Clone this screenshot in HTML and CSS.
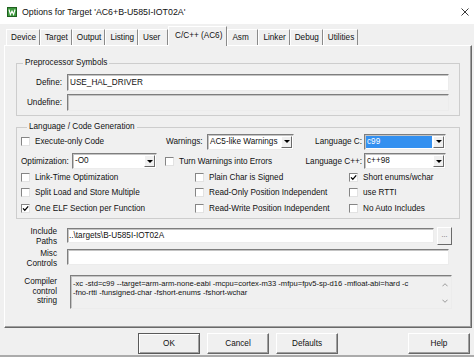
FILE: index.html
```html
<!DOCTYPE html>
<html>
<head>
  <meta charset="utf-8">
  <title>Options for Target 'AC6+B-U585I-IOT02A'</title>
  <link rel="stylesheet" href="styles.css">
</head>
<body>
  <div class="window">
    <!-- Barra de título -->
    <div class="titlebar">
      <svg class="app-icon" viewBox="0 0 10 10">
        <rect x="0.5" y="0.5" width="9" height="9" fill="#3f9a3f" stroke="#1f5f1f"/>
        <path d="M2 2.5 L3.4 7.5 L5 4 L6.6 7.5 L8 2.5" fill="none" stroke="#fff" stroke-width="1.1"/>
      </svg>
      <span class="title-text">Options for Target 'AC6+B-U585I-IOT02A'</span>
      <svg class="close-icon" viewBox="0 0 8 8">
        <path d="M0.5 0.5 L7.5 7.5 M7.5 0.5 L0.5 7.5" stroke="#222" stroke-width="0.9"/>
      </svg>
    </div>

    <!-- Pestañas -->
    <div class="tabs">
      <div class="tab">Device</div>
      <div class="tab">Target</div>
      <div class="tab">Output</div>
      <div class="tab">Listing</div>
      <div class="tab">User</div>
      <div class="tab active">C/C++ (AC6)</div>
      <div class="tab tab-asm">Asm</div>
      <div class="tab">Linker</div>
      <div class="tab">Debug</div>
      <div class="tab">Utilities</div>
    </div>

    <div class="panel">
      <fieldset class="group group-pre">
        <legend>Preprocessor Symbols</legend>
        <div class="field-row">
          <span class="field-label">Define:</span>
          <div class="edit">USE_HAL_DRIVER</div>
        </div>
        <div class="field-row">
          <span class="field-label">Undefine:</span>
          <div class="edit disabled"></div>
        </div>
      </fieldset>

      <fieldset class="group group-lang">
        <legend>Language / Code Generation</legend>

        <div class="lang-row row-1">
          <div class="cell cell-a"><span class="check"></span>Execute-only Code</div>
          <div class="cell cell-b">
            <span class="combo-label">Warnings:</span>
            <div class="combo combo-warn"><span class="combo-text">AC5-like Warnings</span><span class="combo-btn"></span></div>
          </div>
          <div class="cell cell-c">
            <span class="right-label">Language C:</span>
            <div class="combo combo-lang"><span class="combo-text selected">c99</span><span class="combo-btn"></span></div>
          </div>
        </div>

        <div class="lang-row row-2">
          <div class="cell cell-a">
            <span class="opt-label">Optimization:</span>
            <div class="combo combo-opt"><span class="combo-text">-O0</span><span class="combo-btn"></span></div>
          </div>
          <div class="cell cell-b"><span class="check"></span>Turn Warnings into Errors</div>
          <div class="cell cell-c">
            <span class="right-label">Language C++:</span>
            <div class="combo combo-lang"><span class="combo-text">c++98</span><span class="combo-btn"></span></div>
          </div>
        </div>

        <div class="lang-row row-3">
          <div class="cell cell-wide"><span class="check"></span>Link-Time Optimization</div>
          <div class="cell cell-mid"><span class="check"></span>Plain Char is Signed</div>
          <div class="cell"><span class="check checked"><svg viewBox="0 0 7 7"><path d="M1 3.4 L2.8 5.3 L6.2 1.3"/></svg></span>Short enums/wchar</div>
        </div>

        <div class="lang-row row-4">
          <div class="cell cell-wide"><span class="check"></span>Split Load and Store Multiple</div>
          <div class="cell cell-mid"><span class="check"></span>Read-Only Position Independent</div>
          <div class="cell"><span class="check"></span>use RTTI</div>
        </div>

        <div class="lang-row row-5">
          <div class="cell cell-wide"><span class="check checked"><svg viewBox="0 0 7 7"><path d="M1 3.4 L2.8 5.3 L6.2 1.3"/></svg></span>One ELF Section per Function</div>
          <div class="cell cell-mid"><span class="check"></span>Read-Write Position Independent</div>
          <div class="cell"><span class="check"></span>No Auto Includes</div>
        </div>
      </fieldset>

      <!-- Rutas y controles -->
      <div class="path-row include-row">
        <span class="side-label">Include<br>Paths</span>
        <div class="edit include-edit">..\targets\B-U585I-IOT02A</div>
        <div class="browse-btn">...</div>
      </div>

      <div class="path-row misc-row">
        <span class="side-label">Misc<br>Controls</span>
        <div class="edit misc-edit"></div>
      </div>

      <div class="path-row compiler-row">
        <span class="side-label">Compiler<br>control<br>string</span>
        <div class="memo">
          <div class="memo-text">
            <div>-xc -std=c99 --target=arm-arm-none-eabi -mcpu=cortex-m33 -mfpu=fpv5-sp-d16 -mfloat-abi=hard -c</div>
            <div>-fno-rtti -funsigned-char -fshort-enums -fshort-wchar</div>
          </div>
          <div class="memo-scroll">
            <svg viewBox="0 0 7 4"><path d="M0.5 3.5 L3.5 0.5 L6.5 3.5"/></svg>
            <svg viewBox="0 0 7 4"><path d="M0.5 0.5 L3.5 3.5 L6.5 0.5"/></svg>
          </div>
        </div>
      </div>
    </div>

    <!-- Botones -->
    <div class="button-row">
      <div class="btn btn-default">OK</div>
      <div class="btn">Cancel</div>
      <div class="btn">Defaults</div>
      <div class="btn btn-help">Help</div>
    </div>
    <div class="bottom-edge"></div>
  </div>
</body>
</html>
```

FILE: styles.css
```css
/* Reset básico */
* {
  margin: 0;
  padding: 0;
  box-sizing: border-box;
}

body {
  width: 474px;
  height: 357px;
  overflow: hidden;
  background: #f0f0f0;
  font-family: "Liberation Sans", Arial, sans-serif;
  font-size: 8.2px;
  color: #111;
}

.window {
  display: flex;
  flex-direction: column;
  height: 357px;
}

/* BARRA DE TÍTULO */
.titlebar {
  height: 24px;
  background: #fff;
  display: flex;
  align-items: center;
  padding-left: 7px;
}

.app-icon {
  width: 10px;
  height: 10px;
}

.title-text {
  margin-left: 5px;
  font-size: 8.8px;
}

.close-icon {
  width: 8px;
  height: 8px;
  margin-left: auto;
  margin-right: 5px;
}

/* PESTAÑAS */
.tabs {
  position: relative;
  z-index: 1;
  height: 21px;
  display: flex;
  align-items: flex-end;
  padding-left: 6px;
}

.tab {
  height: 16px;
  line-height: 15px;
  min-width: 30px;
  padding: 0 3px 0 4px;
  border-top: 1px solid #fff;
  border-left: 1px solid #fff;
  border-right: 1px solid #8a8a8a;
  white-space: nowrap;
}

.tab.active {
  height: 20px;
  line-height: 17px;
  margin-bottom: -1px;
  padding: 0 4px 0 6px;
  background: #f0f0f0;
}

.tab-asm {
  min-width: 31px;
}

/* PANEL PRINCIPAL */
.panel {
  height: 283px;
  margin: 0 2px 0 4px;
  border: 1px solid;
  border-color: #fff #696969 #696969 #fff;
  box-shadow: inset -1px -1px 0 #a0a0a0;
}

/* Grupos (groupbox) */
.group {
  min-width: 0;
  width: 444px;
  margin-left: 11px;
  border: 1px solid #cdcdcd;
}

.group legend {
  margin-left: 6px;
  padding: 0 2px;
  line-height: 10px;
}

.group-pre {
  margin-top: 12px;
  padding: 6px 10px 4px 0;
}

.group-lang {
  margin-top: 6px;
  padding: 1px 0 2px 4px;
}

/* Define / Undefine */
.field-row {
  display: flex;
  align-items: center;
  height: 17px;
}

.field-row + .field-row {
  margin-top: 3px;
}

.field-label {
  width: 45px;
  text-align: right;
}

/* Cajas de texto hundidas */
.edit {
  height: 17px;
  line-height: 15px;
  padding-left: 2px;
  background: #fff;
  border: 1px solid;
  border-color: #7e7e7e #ececec #ececec #7e7e7e;
  box-shadow: inset 1px 1px 0 #c4c4c4;
  white-space: nowrap;
}

.field-row .edit {
  flex: 1;
  margin-left: 5px;
}

.edit.disabled {
  background: #f0f0f0;
}

/* Filas de Language / Code Generation */
.lang-row {
  display: flex;
  align-items: center;
}

.row-1 { height: 17px; }
.row-2 { height: 16px; margin-top: 3px; }
.row-3 { height: 16px; }
.row-4 { height: 15px; }
.row-5 { height: 16px; }

.cell {
  display: flex;
  align-items: center;
  white-space: nowrap;
}

.cell-a { width: 144px; }
.cell-b { width: 129px; }
.cell-c { width: 152px; }
.cell-wide { width: 174px; }
.cell-mid { width: 154px; }

.combo-label {
  width: 42px;
  padding-left: 1px;
}

.opt-label {
  width: 51px;
}

.right-label {
  width: 70px;
  padding-right: 2px;
  text-align: right;
}

/* Casillas de verificación */
.check {
  width: 9px;
  height: 9px;
  margin-right: 5px;
  flex-shrink: 0;
  display: flex;
  align-items: center;
  justify-content: center;
  background: #fff;
  border: 1px solid;
  border-color: #858585 #e2e2e2 #e2e2e2 #858585;
}

.check svg {
  width: 7px;
  height: 7px;
}

.check path {
  fill: none;
  stroke: #000;
  stroke-width: 1.3;
}

/* Listas desplegables */
.combo {
  height: 16px;
  display: flex;
  padding: 1px;
  background: #fff;
  border: 1px solid;
  border-color: #7e7e7e #ececec #ececec #7e7e7e;
  box-shadow: inset 1px 1px 0 #c4c4c4;
}

.combo-warn { width: 87px; }
.combo-opt { width: 85px; }
.combo-lang { width: 82px; }

.combo-text {
  flex: 1;
  padding-left: 1px;
  line-height: 12px;
  overflow: hidden;
  white-space: nowrap;
}

.combo-text.selected {
  background: #3390f0;
  color: #fff;
  margin-right: 1px;
}

.combo-btn {
  width: 11px;
  display: flex;
  align-items: center;
  justify-content: center;
  background: #f0f0f0;
  border: 1px solid;
  border-color: #fff #6a6a6a #6a6a6a #fff;
}

.combo-btn::after {
  content: "";
  border-top: 3px solid #000;
  border-left: 3px solid transparent;
  border-right: 3px solid transparent;
}

/* Include / Misc / Compiler */
.path-row {
  display: flex;
  align-items: flex-start;
}

.side-label {
  width: 52px;
  text-align: right;
  line-height: 9.5px;
}

.include-row {
  height: 18px;
  margin-top: 8px;
}

.include-edit {
  width: 367px;
  height: 15px;
  line-height: 13px;
  margin: 1px 0 0 10px;
  padding-left: 1px;
}

.browse-btn {
  width: 15px;
  height: 18px;
  margin-left: 3px;
  line-height: 14px;
  text-align: center;
  font-size: 7px;
  color: #555;
  background: #f0f0f0;
  border: 1px solid;
  border-color: #fff #6a6a6a #6a6a6a #fff;
}

.misc-row {
  height: 19px;
  margin-top: 4px;
}

.misc-row .side-label {
  line-height: 10px;
}

.misc-edit {
  width: 382px;
  height: 16px;
  margin-left: 10px;
}

.compiler-row {
  height: 34px;
  margin-top: 7px;
}

.compiler-row .side-label {
  margin-top: 2px;
}

.memo {
  width: 382px;
  height: 34px;
  margin-left: 13px;
  display: flex;
  border: 1px solid;
  border-color: #7e7e7e #ececec #ececec #7e7e7e;
  box-shadow: inset 1px 1px 0 #c4c4c4;
}

.memo-text {
  flex: 1;
  padding: 3px 0 0 2px;
  font-size: 7.6px;
  line-height: 9px;
  white-space: nowrap;
  overflow: hidden;
}

.memo-scroll {
  width: 12px;
  display: flex;
  flex-direction: column;
  justify-content: space-between;
  align-items: center;
  padding: 7px 0 5px;
}

.memo-scroll svg {
  width: 6px;
  height: 4px;
}

.memo-scroll path {
  fill: none;
  stroke: #8c8c8c;
  stroke-width: 1;
}

/* BOTONES */
.button-row {
  display: flex;
  margin-top: 5px;
  padding: 0 4px 0 138px;
}

.btn {
  width: 62px;
  height: 21px;
  line-height: 19px;
  text-align: center;
  background: #f0f0f0;
  border: 1px solid;
  border-color: #fff #696969 #696969 #fff;
  box-shadow: inset -1px -1px 0 #a0a0a0;
}

.btn + .btn {
  margin-left: 7px;
}

.button-row .btn-help {
  margin-left: auto;
}

.btn-default {
  border-color: #5a5a5a;
  box-shadow: inset 1px 1px 0 #fff, inset -1px -1px 0 #a0a0a0;
}

.bottom-edge {
  margin-top: auto;
  height: 2px;
  background: #ababab;
}
```
